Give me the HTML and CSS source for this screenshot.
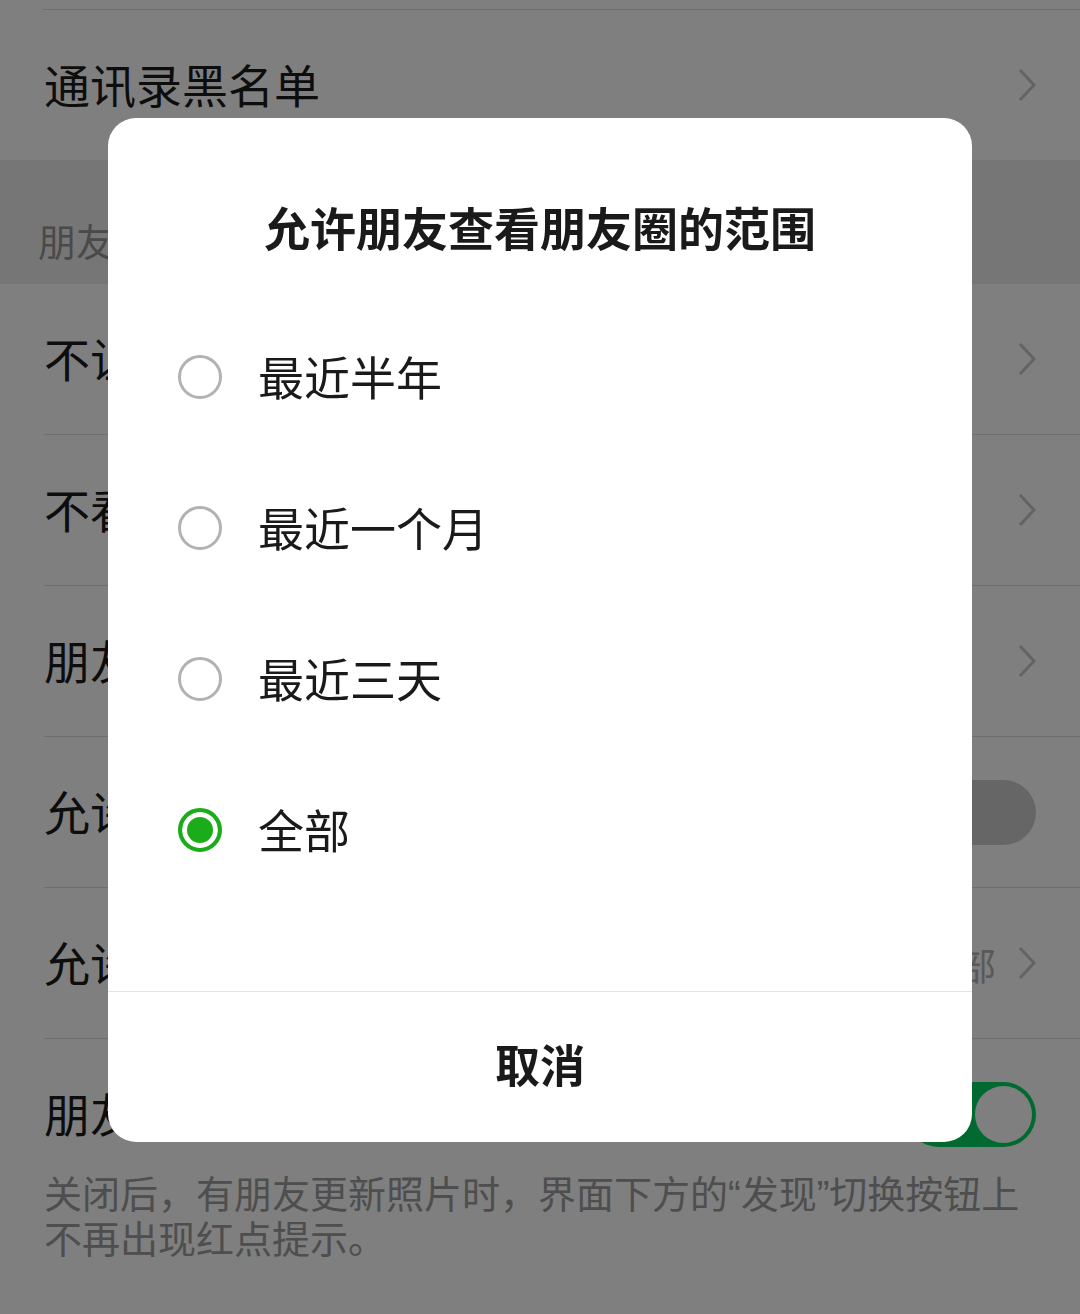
FILE: index.html
```html
<!DOCTYPE html>
<html>
<head>
  <meta charset="utf-8">
  <title>隐私</title>
  <link rel="stylesheet" href="styles.css">
</head>
<body>
  <div class="page">
    <div class="stub"></div>

    <div class="cell">
      <span class="cell-title">通讯录黑名单</span>
      <svg class="arrow" width="18" height="34" viewBox="0 0 18 34"><polyline points="2,2 16,17 2,32" fill="none" stroke="#c7c7cc" stroke-width="3"/></svg>
    </div>

    <div class="group-title">朋友圈</div>

    <div class="cell">
      <span class="cell-title">不让他（她）看我的朋友圈</span>
      <svg class="arrow" width="18" height="34" viewBox="0 0 18 34"><polyline points="2,2 16,17 2,32" fill="none" stroke="#c7c7cc" stroke-width="3"/></svg>
    </div>
    <div class="cell">
      <span class="cell-title">不看他（她）的朋友圈</span>
      <svg class="arrow" width="18" height="34" viewBox="0 0 18 34"><polyline points="2,2 16,17 2,32" fill="none" stroke="#c7c7cc" stroke-width="3"/></svg>
    </div>
    <div class="cell">
      <span class="cell-title">朋友圈黑名单</span>
      <svg class="arrow" width="18" height="34" viewBox="0 0 18 34"><polyline points="2,2 16,17 2,32" fill="none" stroke="#c7c7cc" stroke-width="3"/></svg>
    </div>
    <div class="cell">
      <span class="cell-title">允许陌生人查看十条朋友圈</span>
      <span class="switch"><span class="knob"></span></span>
    </div>
    <div class="cell">
      <span class="cell-title">允许朋友查看朋友圈的范围</span>
      <span class="cell-value">全部</span>
      <svg class="arrow" width="18" height="34" viewBox="0 0 18 34"><polyline points="2,2 16,17 2,32" fill="none" stroke="#c7c7cc" stroke-width="3"/></svg>
    </div>
    <div class="cell last">
      <span class="cell-title">朋友圈更新提醒</span>
      <span class="switch on"><span class="knob"></span></span>
    </div>

    <p class="note">关闭后，有朋友更新照片时，界面下方的“发现”切换按钮上不再出现红点提示。</p>
  </div>

  <div class="mask">
    <div class="dialog">
      <h2 class="dialog-title">允许朋友查看朋友圈的范围</h2>
      <ul class="options">
        <li class="option"><span class="radio"></span><span class="label">最近半年</span></li>
        <li class="option"><span class="radio"></span><span class="label">最近一个月</span></li>
        <li class="option"><span class="radio"></span><span class="label">最近三天</span></li>
        <li class="option"><span class="radio checked"></span><span class="label">全部</span></li>
      </ul>
      <div class="dialog-btn">取消</div>
    </div>
  </div>
</body>
</html>
```

FILE: styles.css
```css
/* Privacy settings page with the range picker open */
body {
  margin: 0;
  padding: 0;
  font-family: "Noto Sans CJK SC", "Noto Sans", sans-serif;
  background-color: #fff;
  color: #1a1a1a;
}
.page {
  height: 1314px;
  overflow: hidden;
  background-color: #fff;
}
.stub {
  height: 9px;
  margin-left: 43px;
  border-bottom: 1px solid #dcdcdc;
}
.cell {
  display: flex;
  align-items: center;
  height: 150px;
  margin-left: 44px;
  padding-right: 44px;
  border-bottom: 1px solid #dcdcdc;
}
.cell.last {
  border-bottom: none;
}
.cell-title {
  flex: 1;
  font-size: 46px;
  line-height: 50px;
  margin-bottom: 4px;
  white-space: nowrap;
}
.cell-value {
  font-size: 38px;
  color: #b2b2b2;
  margin-right: 22px;
}
.arrow {
  display: block;
}
.group-title {
  display: flex;
  align-items: flex-end;
  box-sizing: border-box;
  height: 124px;
  margin-top: -1px;
  padding: 0 0 24px 38px;
  background-color: #ededed;
  font-size: 38px;
  line-height: 40px;
  color: #949494;
}
.switch {
  position: relative;
  width: 130px;
  height: 65px;
  border-radius: 33px;
  background-color: #cccccc;
}
.switch .knob {
  position: absolute;
  top: 4px;
  left: 4px;
  width: 57px;
  height: 57px;
  border-radius: 50%;
  background-color: #fff;
}
.switch.on {
  background-color: #05d360;
}
.switch.on .knob {
  left: auto;
  right: 4px;
}
.note {
  margin: -16px 0 0;
  padding: 0 44px;
  font-family: "Liberation Sans", "Noto Sans CJK SC", sans-serif;
  font-size: 38px;
  line-height: 45px;
  color: #9c9c9c;
}

/* dialog */
.mask {
  position: fixed;
  top: 0;
  left: 0;
  right: 0;
  bottom: 0;
  display: flex;
  justify-content: center;
  align-items: flex-start;
  padding-top: 118px;
  background-color: rgba(0, 0, 0, 0.5);
}
.dialog {
  width: 864px;
  background-color: #fff;
  border-radius: 28px;
  overflow: hidden;
}
.dialog-title {
  margin: 0 0 52px;
  padding-top: 85px;
  font-size: 46px;
  line-height: 46px;
  font-weight: bold;
  text-align: center;
  color: #1a1a1a;
}
.options {
  list-style: none;
  margin: 0;
  padding: 0 0 86px 70px;
}
.option {
  display: flex;
  align-items: center;
  height: 151px;
  font-size: 46px;
  color: #1a1a1a;
}
.label {
  margin-bottom: 4px;
}
.radio {
  box-sizing: border-box;
  width: 44px;
  height: 44px;
  margin-right: 36px;
  border: 3px solid #b2b2b2;
  border-radius: 50%;
}
.radio.checked {
  border: 4px solid #1aad19;
  background-color: #1aad19;
  box-shadow: inset 0 0 0 5px #fff;
}
.dialog-btn {
  height: 150px;
  border-top: 1px solid #e5e5e5;
  font-size: 45px;
  font-weight: bold;
  line-height: 144px;
  text-align: center;
  color: #1a1a1a;
}
```
